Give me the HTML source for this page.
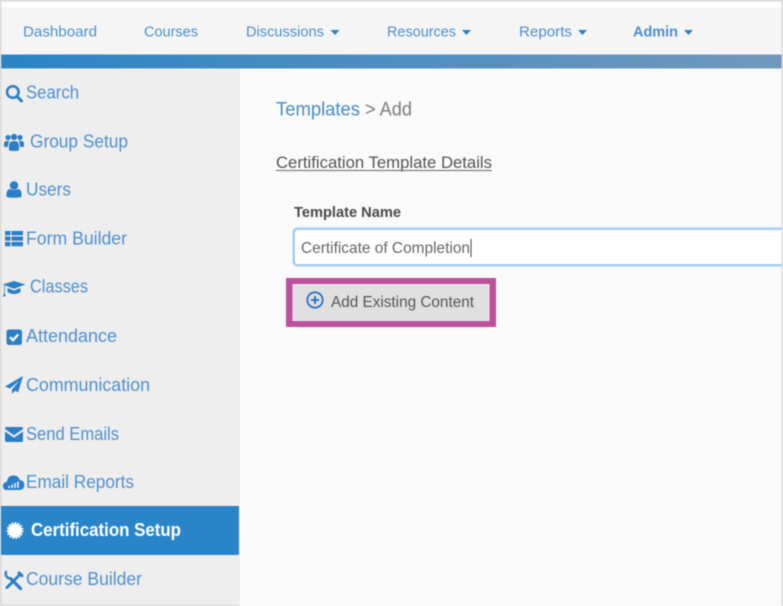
<!DOCTYPE html>
<html lang="en">
<head>
<meta charset="utf-8">
<title>Certification Template</title>
<style>
html,body{margin:0;padding:0;width:783px;height:606px;overflow:hidden;background:#fafafa}
svg{display:block;filter:blur(.45px)}
text{font-family:"Liberation Sans",sans-serif}
.n{font-size:15px;fill:#4b8fcf}
.s{font-size:18.5px;fill:#4f8fd0}
.i{fill:#2b7fc6}
</style>
</head>
<body>
<svg width="783" height="606" viewBox="0 0 783 606" xmlns="http://www.w3.org/2000/svg">
<defs>
<linearGradient id="g" x1="0" x2="1" y1="0" y2="0"><stop offset="0" stop-color="#2b84c6"/><stop offset="1" stop-color="#7199bd"/></linearGradient>
</defs>
<rect width="783" height="606" fill="#fafafa"/>
<rect width="783" height="7" fill="#fff"/>
<rect width="783" height="1.5" fill="#d2d2d2"/>
<rect x="1" y="7" width="781" height="47" fill="#f5f5f5"/>
<rect x="1" y="54.5" width="781" height="14" fill="url(#g)"/>
<rect x="1" y="69" width="239" height="535" fill="#eeeeee"/>
<rect x="0" y="0" width="1.3" height="606" fill="#d2d2d2"/>
<rect x="0" y="604.5" width="240" height="1.5" fill="#d8d8d8"/>

<!-- top nav -->
<text class="n" x="23" y="36.5" textLength="74" lengthAdjust="spacingAndGlyphs">Dashboard</text>
<text class="n" x="144" y="36.5" textLength="54" lengthAdjust="spacingAndGlyphs">Courses</text>
<text class="n" x="246" y="36.5" textLength="78" lengthAdjust="spacingAndGlyphs">Discussions</text>
<path class="i" d="M330.5 30h9l-4.500 5z"/>
<text class="n" x="387" y="36.5" textLength="69" lengthAdjust="spacingAndGlyphs">Resources</text>
<path class="i" d="M462 30h9l-4.500 5z"/>
<text class="n" x="519" y="36.5" textLength="53" lengthAdjust="spacingAndGlyphs">Reports</text>
<path class="i" d="M578 30h9l-4.500 5z"/>
<text class="n" x="633" y="36.5" textLength="45" lengthAdjust="spacingAndGlyphs" font-weight="bold">Admin</text>
<path class="i" d="M684 30h9l-4.500 5z"/>

<!-- sidebar text -->
<text class="s" x="26" y="98.500" textLength="53" lengthAdjust="spacingAndGlyphs">Search</text>
<text class="s" x="30" y="147.500" textLength="98" lengthAdjust="spacingAndGlyphs">Group Setup</text>
<text class="s" x="26" y="195.500" textLength="45" lengthAdjust="spacingAndGlyphs">Users</text>
<text class="s" x="26" y="244.500" textLength="101" lengthAdjust="spacingAndGlyphs">Form Builder</text>
<text class="s" x="30" y="292.500" textLength="58" lengthAdjust="spacingAndGlyphs">Classes</text>
<text class="s" x="26" y="342" textLength="91" lengthAdjust="spacingAndGlyphs">Attendance</text>
<text class="s" x="26" y="391" textLength="124" lengthAdjust="spacingAndGlyphs">Communication</text>
<text class="s" x="26" y="440" textLength="93" lengthAdjust="spacingAndGlyphs">Send Emails</text>
<text class="s" x="26" y="488" textLength="108" lengthAdjust="spacingAndGlyphs">Email Reports</text>
<rect x="1" y="506" width="238" height="49" fill="#2a85c8"/>
<text x="31" y="536" font-size="18.5" font-weight="bold" fill="#fff" textLength="150" lengthAdjust="spacingAndGlyphs">Certification Setup</text>
<text class="s" x="26" y="585" textLength="116" lengthAdjust="spacingAndGlyphs">Course Builder</text>

<!-- sidebar icons -->
<g fill="none" stroke="#2b7fc6" stroke-width="2.500"><circle cx="12.800" cy="92" r="5.800"/><path d="M17 96.500l4.500 4.500" stroke-width="3" stroke-linecap="round"/></g>
<g class="i"><circle cx="14" cy="137" r="3.100"/><circle cx="8" cy="137.500" r="2.600"/><circle cx="20" cy="137.500" r="2.600"/><path d="M9 150.500v-5q0-4.500 5-4.500t5 4.500v5q-5 1-10 0z"/><path d="M5 147q-1 0-1-1v-2.500q0-2.500 3-2.500h2.500q-1.500 1.500-1.500 6zM23 147q1 0 1-1v-2.500q0-2.500-3-2.500h-2.500q1.500 1.500 1.500 6z"/></g>
<g class="i"><circle cx="14" cy="185.500" r="4.200"/><path d="M6.500 197v-3q0-4.500 3.500-5q4 2 8 0q3.500.5 3.500 5v3q-7.500 1.500-15 0z"/></g>
<g class="i"><path d="M5 231h5.500v4.300h-5.500zM5 236.500h5.500v4.300h-5.500zM5 242h5.500v4.300h-5.500zM11.500 231h11.500v4.300h-11.500zM11.500 236.500h11.500v4.300h-11.500zM11.500 242h11.500v4.300h-11.500z"/></g>
<g class="i"><path d="M2.500 284.500l11.500-3.500 11.500 3.500-11.500 4.200z"/><path d="M7.500 288l6.500 2.500 6.500-2.500v4q-6.500 4-13 0z"/><path d="M4 286v7l-1 3.500h2.600l-.8-3.500V286z"/></g>
<rect x="6.500" y="329.500" width="15.500" height="15.500" rx="2.500" fill="#2b7fc6"/>
<path d="M10 337.200l3 3 5.200-5.700" fill="none" stroke="#fff" stroke-width="2.300"/>
<path class="i" d="M23 376L5 386.500l5 2 9.500-8-7.500 9v4.500l3-3.200 3.200 1.500z"/>
<path class="i" d="M5 428q0-1 1-1h16q1 0 1 1v1l-9 6.200L5 429zM5 431.500l9 6.200 9-6.200v9q0 1.500-1.500 1.500h-15q-1.500 0-1.500-1.500z"/>
<path class="i" d="M6.500 490q-3.500 0-3.500-4t3.800-4q1-6.500 6.700-6.500 5 0 6.500 4.700 4.300.2 4.300 4.800t-4.300 5z"/>
<path d="M9 488v-2M12 488v-3.500M15 488v-5M18 488v-6.500" stroke="#eee" stroke-width="1.600" fill="none"/>
<circle cx="15" cy="530.500" r="6.800" fill="#fff"/>
<circle cx="15" cy="530.500" r="7.500" fill="none" stroke="#fff" stroke-width="1.700" stroke-dasharray="2 1.140"/>
<g fill="none" stroke="#2b7fc6" stroke-linecap="round">
<path d="M11 579l9.500 9.500" stroke-width="3.200"/>
<path d="M20.500 574L7 587.500" stroke-width="2.800"/>
<path d="M6 572a4.600 4.600 0 0 0 4.800 6.300" stroke-width="2.400"/>
<path d="M19 573l3 2.700" stroke-width="3"/>
</g>

<!-- main -->
<text x="276" y="115.500" font-size="19.500" fill="#4a8cc9" textLength="84" lengthAdjust="spacingAndGlyphs">Templates</text>
<text x="365" y="115.500" font-size="19.500" fill="#7c7c7c" textLength="47" lengthAdjust="spacingAndGlyphs">&gt; Add</text>
<text x="276" y="168" font-size="17" fill="#555" textLength="216" lengthAdjust="spacingAndGlyphs">Certification Template Details</text>
<rect x="276" y="170" width="216" height="1" fill="#666"/>
<text x="294" y="217" font-size="14.500" font-weight="bold" fill="#4a4a4a" textLength="107" lengthAdjust="spacingAndGlyphs">Template Name</text>
<path d="M783 229H298q-4 0-4 4v28q0 4 4 4h485" fill="#fff" stroke="#cfe4f6" stroke-width="4"/>
<path d="M783 229H298q-4 0-4 4v28q0 4 4 4h485" fill="#fff" stroke="#8fc0ec" stroke-width="1.500"/>
<text x="301" y="253" font-size="15.500" fill="#666" textLength="169" lengthAdjust="spacingAndGlyphs">Certificate of Completion</text>
<rect x="470.500" y="239" width="1" height="18" fill="#444"/>
<rect x="286" y="278" width="210" height="49" fill="#bd4f9c"/>
<rect x="293" y="284.500" width="196" height="36" fill="#e0e0e0" stroke="#f2e6ef" stroke-width="1"/>
<circle cx="315" cy="300" r="7.700" fill="none" stroke="#2a70c2" stroke-width="1.800"/>
<path d="M311 300h8M315 296v8" stroke="#2a70c2" stroke-width="1.900" fill="none"/>
<text x="331" y="307" font-size="15.500" fill="#555" textLength="143" lengthAdjust="spacingAndGlyphs">Add Existing Content</text>
<rect x="781.5" y="0" width="1.500" height="606" fill="#d8d8d8"/>
</svg>
</body>
</html>
